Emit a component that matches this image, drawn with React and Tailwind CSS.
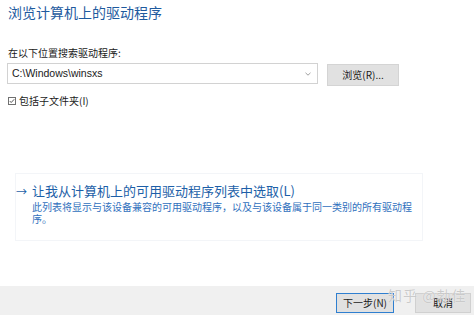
export default function App() {
  const font = { fontFamily: '"Microsoft YaHei", "Noto Sans CJK SC", "Liberation Sans", sans-serif' };
  return (
    <div className="relative w-[474px] h-[315px] bg-white overflow-hidden flex flex-col text-[#1a1a1a]" style={font}>
      <div className="flex-1 flex flex-col pl-[8px]">
        <h1 className="mt-[2px] text-[14px] leading-[20px] text-[#1e5a9e]">浏览计算机上的驱动程序</h1>

        <p className="mt-[25px] text-[10px] leading-[12px]">在以下位置搜索驱动程序:</p>

        <div className="mt-[4px] flex items-start gap-[9px]">
          <div className="w-[311px] h-[21px] -ml-[1px] border border-[#d2d2d2] bg-white flex items-center justify-between pl-[4px] pr-[6px]">
            <span className="text-[10.5px] leading-none" style={{ fontFamily: '"Liberation Sans", sans-serif' }}>C:\Windows\winsxs</span>
            <svg width="6" height="4" viewBox="0 0 6 4" className="text-[#a0a0a0]">
              <path d="M0.5 0.8l2.5 2.4 2.5-2.4" fill="none" stroke="currentColor" strokeWidth="1" />
            </svg>
          </div>
          <button className="mt-[1px] w-[72px] h-[22px] bg-[#e1e1e1] border border-[#d4d4d4] text-[10px] leading-none">浏览(R)...</button>
        </div>

        <div className="mt-[9px] flex items-center gap-[3px] h-[12px]">
          <span className="w-[8px] h-[8px] border border-[#707070] flex items-center justify-center">
            <svg width="6" height="6" viewBox="0 0 6 6">
              <path d="M0.8 3.1l1.4 1.4 3-3.2" fill="none" stroke="#444" strokeWidth="0.9" />
            </svg>
          </span>
          <span className="text-[10px] leading-[12px]">包括子文件夹(I)</span>
        </div>

        <div className="mt-[66px] ml-[7px] w-[408px] h-[68px] border border-[#f3f5f8] flex gap-[5px] pt-[9px]">
          <span className="text-[11px] leading-[16px] text-[#1d5fa8] w-[11px] text-right">→</span>
          <div className="flex flex-col">
            <span className="text-[13px] leading-[16px] text-[#1d5fa8]">让我从计算机上的可用驱动程序列表中选取(L)</span>
            <span className="mt-[2px] w-[381px] text-[10px] leading-[12px] text-[#3070bd]">
              此列表将显示与该设备兼容的可用驱动程序，以及与该设备属于同一类别的所有驱动程序。
            </span>
          </div>
        </div>
      </div>

      <div className="h-[29px] bg-[#f0f0f0] flex items-start justify-end gap-[21px] pr-[3px] pt-[7px]">
        <button className="w-[58px] h-[20px] bg-[#e1e1e1] border border-[#2f7fd0] text-[10px] leading-none">下一步(N)</button>
        <button className="w-[56px] h-[20px] bg-[#e1e1e1] border border-[#d0d0d0] text-[10px] leading-none">取消</button>
      </div>

      <div className="absolute left-[388px] top-[288px] text-[14px] leading-none text-[#bdbdbd]/80 tracking-[1px]" style={{ textShadow: '0 0 1px #fff' }}>
        知乎 @勃佳
      </div>
    </div>
  );
}
